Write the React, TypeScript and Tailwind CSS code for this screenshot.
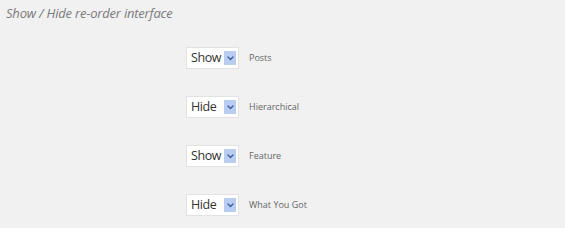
const rows = [
  { value: "Show", label: "Posts" },
  { value: "Hide", label: "Hierarchical" },
  { value: "Show", label: "Feature" },
  { value: "Hide", label: "What You Got" },
];

// Fake select box: white field with a small light-blue drop button on the right
function Picker({ value }: { value: string }) {
  return (
    <div className="flex h-[22px] w-[53px] items-center justify-between border border-[#e2e2e2] bg-white pl-[4px] pr-[2px]">
      <span className="text-[12.5px] leading-none tracking-[-0.4px] text-[#333]">{value}</span>
      <span className="flex h-[14px] w-[12px] items-center justify-center bg-[#b9cdf3]">
        <svg width="7" height="5" viewBox="0 0 7 5" fill="none" aria-hidden>
          <path d="M1 1l2.5 2.5L6 1" stroke="#3b5e9c" strokeWidth="1.4" strokeLinecap="round" strokeLinejoin="round" />
        </svg>
      </span>
    </div>
  );
}

export default function App() {
  return (
    <div
      className="h-[228px] w-[565px] overflow-hidden bg-[#f1f1f1] pl-[6px] pt-[3px]"
      style={{ fontFamily: '"Open Sans", "Noto Sans", sans-serif' }}
    >
      <h3 className="text-[13px] italic leading-[20px] tracking-[-0.2px] text-[#7a7a7a]">Show / Hide re-order interface</h3>
      <div className="ml-[180px] mt-[24px] flex flex-col gap-[27px]">
        {rows.map((r, i) => (
          <div key={i} className="flex items-center gap-[10px]">
            <Picker value={r.value} />
            <span className="text-[9px] text-[#666]">{r.label}</span>
          </div>
        ))}
      </div>
    </div>
  );
}
